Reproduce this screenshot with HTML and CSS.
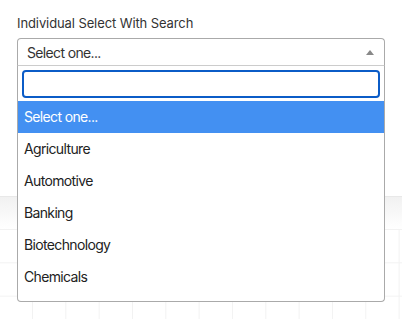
FILE: index.html
```html
<!DOCTYPE html>
<html>
<head>
<meta charset="utf-8">
<link rel="stylesheet" href="styles.css">
</head>
<body>
<div class="page">
  <div class="band"></div>
  <div class="grid"></div>
  <div class="field">
    <label class="label">Individual Select With Search</label>
    <div class="select">
      <div class="selection">
        <span class="current">Select one...</span>
        <span class="arrow"></span>
      </div>
      <div class="dropdown">
        <div class="search"><input class="search-input" type="text"></div>
        <ul class="results">
          <li class="option active">Select one...</li>
          <li class="option">Agriculture</li>
          <li class="option">Automotive</li>
          <li class="option">Banking</li>
          <li class="option">Biotechnology</li>
          <li class="option">Chemicals</li>
        </ul>
      </div>
    </div>
  </div>
</div>
</body>
</html>
```
FILE: styles.css
```css
html, body {
  margin: 0;
  padding: 0;
  background: #fff;
}
.page {
  position: relative;
  width: 402px;
  height: 319px;
  overflow: hidden;
  font-family: Inter, "Noto Sans", sans-serif;
  color: #222;
}
.band {
  position: absolute;
  left: 0;
  right: 0;
  top: 196px;
  height: 32px;
  border-top: 1px solid #e8e8e8;
  background: linear-gradient(#f1f1f1, #fff);
}
.grid {
  position: absolute;
  left: 0;
  right: 0;
  top: 229px;
  bottom: 0;
  background-image:
    linear-gradient(#f2f2f2 1px, transparent 1px),
    linear-gradient(90deg, #f2f2f2 1px, transparent 1px);
  background-size: 33.33px 33.33px;
  background-position: 32px 0;
}
.field {
  position: relative;
  padding: 15px 17px 0 17px;
}
.label {
  display: block;
  font-size: 13px;
  line-height: 16px;
  letter-spacing: -0.1px;
  color: #333;
  margin-bottom: 7px;
}
.select {
  width: 368px;
}
.selection {
  height: 26px;
  border: 1px solid #aaa;
  border-bottom-color: #ccc;
  border-radius: 4px 4px 0 0;
  background: #fff;
  display: flex;
  align-items: center;
  justify-content: space-between;
  padding: 0 8px 0 9px;
}
.current {
  font-size: 14px;
  letter-spacing: -0.65px;
  color: #333;
}
.arrow {
  width: 0;
  height: 0;
  border-left: 4px solid transparent;
  border-right: 4px solid transparent;
  border-bottom: 5px solid #888;
  margin-right: 2px;
}
.dropdown {
  position: absolute;
  width: 366px;
  border: 1px solid #aaa;
  border-top: none;
  border-radius: 0 0 4px 4px;
  background: #fff;
  box-sizing: content-box;
}
.search {
  padding: 4px 4px 3px 4px;
}
.search-input {
  display: block;
  box-sizing: border-box;
  width: 100%;
  height: 28px;
  border: 2px solid #0b5cc7;
  border-radius: 4px;
  outline: none;
  margin: 0;
  padding: 0 6px;
  font: inherit;
}
.results {
  list-style: none;
  margin: 0;
  padding: 0;
  height: 200px;
  overflow: hidden;
}
.option {
  height: 32px;
  line-height: 32px;
  padding: 0 6px;
  font-size: 14px;
  letter-spacing: -0.65px;
  color: #222;
}
.option.active {
  background: #4390f2;
  color: #fff;
}
```
